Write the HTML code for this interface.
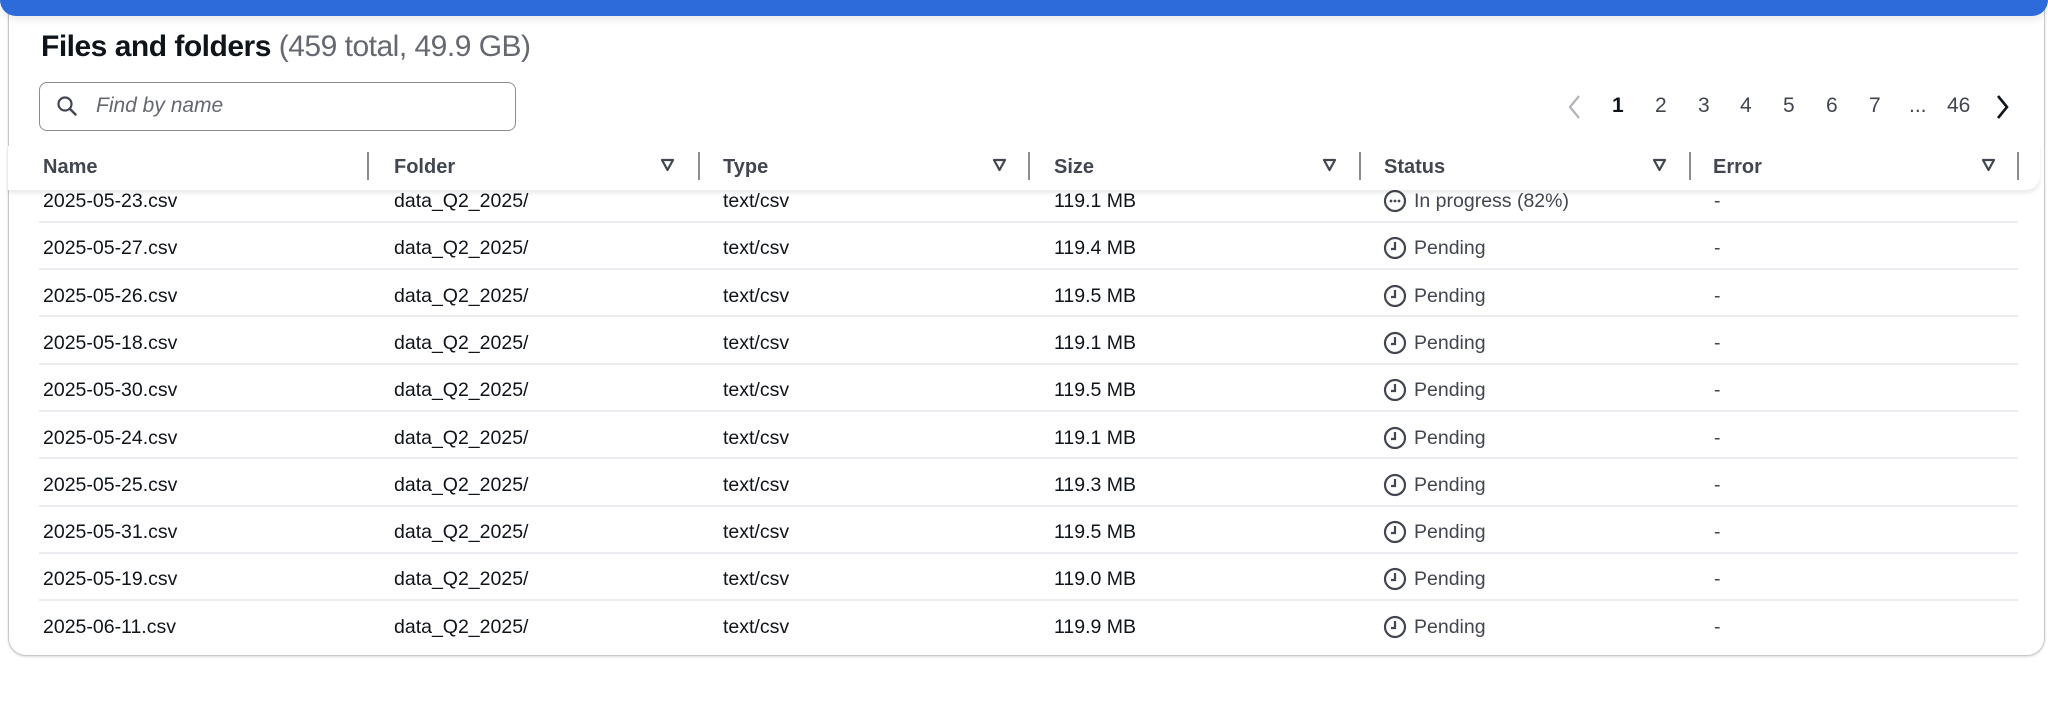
<!DOCTYPE html>
<html><head><meta charset="utf-8"><style>
*{margin:0;padding:0;box-sizing:border-box}
body{width:2048px;height:726px;background:#fff;font-family:"Liberation Sans",sans-serif;position:relative;overflow:hidden;color:#0f141a}
.abs{position:absolute}
.card{left:8px;top:-20px;width:2037px;height:676px;border:1px solid #c6c6cd;border-radius:18px;box-shadow:0 1px 2px rgba(0,0,0,.15)}
.blue{left:0;top:0;width:2048px;height:16px;background:#2c6bd9;border-radius:0 0 18px 18px;box-shadow:0 4px 8px rgba(0,0,0,.08)}
.title{left:41px;top:30px;font-size:30px;font-weight:bold;letter-spacing:-0.5px}
.title span{font-weight:normal;color:#656871}
.search{left:39px;top:82px;width:477px;height:49px;border:1.5px solid #8c8c94;border-radius:8px}
.search i{position:absolute;left:56px;top:11px;font-size:21px;color:#656871;font-style:italic}
.pg{top:94px;font-size:21px;color:#424650}
.hdr{left:8px;top:146px;width:2032px;height:44px;background:#fff;box-shadow:0 3px 5px rgba(0,0,0,.09);border-radius:0 0 14px 0;z-index:2}
.h{top:156px;font-size:20px;font-weight:bold;color:#424650;z-index:3}
.div{top:152px;width:2px;height:28px;background:#8c8c94;z-index:3}
.fl{top:158px;z-index:3}
.cell{font-size:19.5px;color:#0f141a}
.st{color:#424650}
.line{left:39px;width:1979px;height:2px;background:#ebebf0}
</style></head><body>
<div class="abs card"></div>
<div class="abs blue"></div>
<div class="abs title">Files and folders <span>(459 total, 49.9 GB)</span></div>
<div class="abs search"><svg class="abs" style="left:16px;top:12px" width="22" height="22" viewBox="0 0 22 22"><circle cx="9" cy="9" r="6.5" fill="none" stroke="#424650" stroke-width="2.2"/><path d="M14 14l5.5 5.5" stroke="#424650" stroke-width="2.4" stroke-linecap="round"/></svg><i>Find by name</i></div>
<svg class="abs" style="left:1567px;top:94px" width="16" height="26" viewBox="0 0 16 26"><path d="M12 2L3 13l9 11" fill="none" stroke="#b4b4bb" stroke-width="2.2"/></svg>
<div class="abs pg" style="left:1612px;font-weight:bold;color:#0f141a">1</div>
<div class="abs pg" style="left:1655px">2</div>
<div class="abs pg" style="left:1698px">3</div>
<div class="abs pg" style="left:1740px">4</div>
<div class="abs pg" style="left:1783px">5</div>
<div class="abs pg" style="left:1826px">6</div>
<div class="abs pg" style="left:1869px">7</div>
<div class="abs pg" style="left:1909px">...</div>
<div class="abs pg" style="left:1947px">46</div>
<svg class="abs" style="left:1995px;top:94px" width="16" height="26" viewBox="0 0 16 26"><path d="M3 2l9 11-9 11" fill="none" stroke="#0f141a" stroke-width="2.6"/></svg>
<div class="abs hdr"></div>
<div class="abs h" style="left:43px">Name</div>
<div class="abs h" style="left:394px">Folder</div>
<div class="abs h" style="left:723px">Type</div>
<div class="abs h" style="left:1054px">Size</div>
<div class="abs h" style="left:1384px">Status</div>
<div class="abs h" style="left:1713px">Error</div>
<div class="abs div" style="left:367px"></div><div class="abs div" style="left:698px"></div><div class="abs div" style="left:1028px"></div><div class="abs div" style="left:1359px"></div><div class="abs div" style="left:1689px"></div><div class="abs div" style="left:2017px"></div>
<svg class="abs fl" style="left:660px" width="15" height="14" viewBox="0 0 15 14"><path d="M2 2h11L7.5 12z" fill="none" stroke="#424650" stroke-width="2.2" stroke-linejoin="round"/></svg>
<svg class="abs fl" style="left:992px" width="15" height="14" viewBox="0 0 15 14"><path d="M2 2h11L7.5 12z" fill="none" stroke="#424650" stroke-width="2.2" stroke-linejoin="round"/></svg>
<svg class="abs fl" style="left:1322px" width="15" height="14" viewBox="0 0 15 14"><path d="M2 2h11L7.5 12z" fill="none" stroke="#424650" stroke-width="2.2" stroke-linejoin="round"/></svg>
<svg class="abs fl" style="left:1652px" width="15" height="14" viewBox="0 0 15 14"><path d="M2 2h11L7.5 12z" fill="none" stroke="#424650" stroke-width="2.2" stroke-linejoin="round"/></svg>
<svg class="abs fl" style="left:1981px" width="15" height="14" viewBox="0 0 15 14"><path d="M2 2h11L7.5 12z" fill="none" stroke="#424650" stroke-width="2.2" stroke-linejoin="round"/></svg>
<div id="rows"></div>
<script>
var d=[["2025-05-23.csv","119.1 MB",1],["2025-05-27.csv","119.4 MB"],["2025-05-26.csv","119.5 MB"],["2025-05-18.csv","119.1 MB"],["2025-05-30.csv","119.5 MB"],["2025-05-24.csv","119.1 MB"],["2025-05-25.csv","119.3 MB"],["2025-05-31.csv","119.5 MB"],["2025-05-19.csv","119.0 MB"],["2025-06-11.csv","119.9 MB"]];
var h="";
d.forEach(function(r,i){var c=200+i*47.3;var t=c-10;
if(i>0)h+='<div class="abs line" style="top:'+(c-26.5)+'px"></div>';
h+='<div class="abs cell" style="left:43px;top:'+t+'px">'+r[0]+'</div><div class="abs cell" style="left:394px;top:'+t+'px">data_Q2_2025/</div><div class="abs cell" style="left:723px;top:'+t+'px">text/csv</div><div class="abs cell" style="left:1054px;top:'+t+'px">'+r[1]+'</div>';
var ic=r[2]?'<circle cx="12" cy="12" r="10" fill="none" stroke="#424650" stroke-width="2.2"/><circle cx="8" cy="12" r="1.4" fill="#424650"/><circle cx="12" cy="12" r="1.4" fill="#424650"/><circle cx="16" cy="12" r="1.4" fill="#424650"/>':'<circle cx="12" cy="12" r="10" fill="none" stroke="#424650" stroke-width="2.2"/><path d="M12 6v7H8" fill="none" stroke="#424650" stroke-width="2.2"/>';
h+='<svg class="abs" style="left:1383px;top:'+(c-11)+'px" width="24" height="24" viewBox="0 0 24 24">'+ic+'</svg><div class="abs cell st" style="left:1414px;top:'+t+'px">'+(r[2]?'In progress (82%)':'Pending')+'</div><div class="abs cell st" style="left:1714px;top:'+t+'px">-</div>';});
document.getElementById("rows").innerHTML=h;
</script>
</body></html>
